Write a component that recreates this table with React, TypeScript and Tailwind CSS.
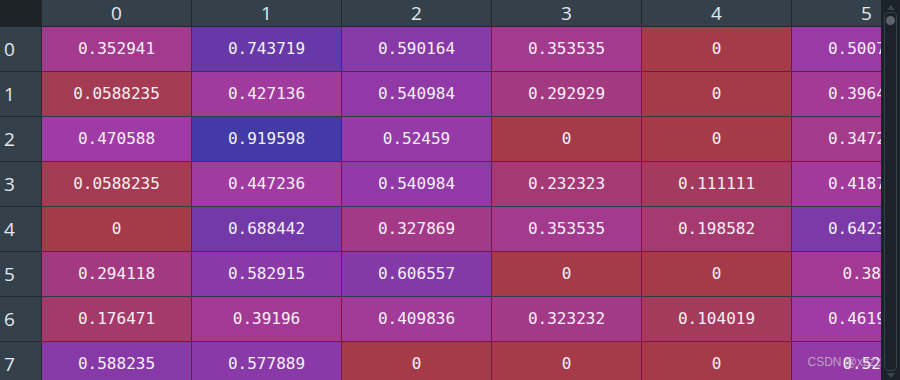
import React from "react";

const data: number[][] = [
  [0.352941, 0.743719, 0.590164, 0.353535, 0, 0.500705],
  [0.0588235, 0.427136, 0.540984, 0.292929, 0, 0.396402],
  [0.470588, 0.919598, 0.52459, 0, 0, 0.347281],
  [0.0588235, 0.447236, 0.540984, 0.232323, 0.111111, 0.418778],
  [0, 0.688442, 0.327869, 0.353535, 0.198582, 0.642324],
  [0.294118, 0.582915, 0.606557, 0, 0, 0.381],
  [0.176471, 0.39196, 0.409836, 0.323232, 0.104019, 0.461997],
  [0.588235, 0.577889, 0, 0, 0, 0.526],
];

// value -> background, red through magenta to blue
const stops: [number, number[]][] = [
  [0, [165, 59, 72]],
  [0.35, [163, 58, 140]],
  [0.47, [160, 58, 166]],
  [0.6, [133, 57, 168]],
  [0.92, [67, 58, 168]],
];

function cellColor(v: number) {
  for (let i = 1; i < stops.length; i++) {
    const [v1, c1] = stops[i];
    const [v0, c0] = stops[i - 1];
    if (v <= v1 || i === stops.length - 1) {
      const t = Math.min(1, Math.max(0, (v - v0) / (v1 - v0)));
      const c = c0.map((x, k) => Math.round(x + (c1[k] - x) * t));
      return `rgb(${c[0]},${c[1]},${c[2]})`;
    }
  }
  return "rgb(165,59,72)";
}

const fmt = (v: number) => (v === 0 ? "0" : String(v));

export default function App() {
  return (
    <div className="w-[900px] h-[380px] flex bg-[#1b2229] overflow-hidden">
      <div className="flex-1 overflow-hidden relative">
        <div className="grid grid-cols-[42px_repeat(6,150px)] w-max">
          {/* header */}
          <div className="h-[27px] bg-[#1b2228] border-r border-b border-[#1f282e]" />
          {[0, 1, 2, 3, 4, 5].map((c) => (
            <div
              key={c}
              className="h-[27px] bg-[#34414b] border-r border-b border-[#1f282e] flex items-center justify-center text-[19px] text-[#e3e8ec] font-['Open_Sans',sans-serif]"
            >
              {c}
            </div>
          ))}

          {data.map((row, r) => (
            <React.Fragment key={r}>
              <div className="h-[45px] bg-[#34414b] border-r border-b border-[#232c33] flex items-center pl-[4px] text-[19px] text-[#e3e8ec] font-['Open_Sans',sans-serif]">
                {r}
              </div>
              {row.map((v, c) => (
                <div
                  key={c}
                  className="h-[45px] border-r border-b border-[#2e3a46] flex items-center justify-center text-[16px] text-[#f4f0f4] font-['DejaVu_Sans_Mono',monospace]"
                  style={{ backgroundColor: cellColor(v) }}
                >
                  {fmt(v)}
                </div>
              ))}
            </React.Fragment>
          ))}
        </div>
        <div className="absolute right-[0px] bottom-[9px] text-[12px] text-[#c8c8c8]/75 font-['Liberation_Sans',sans-serif]">
          CSDN @xzzz
        </div>
      </div>

      {/* scrollbar */}
      <div className="w-[19px] h-full flex flex-col items-center bg-[#1b2229]">
        <svg width="10" height="8" viewBox="0 0 10 8" className="mt-[3px]">
          <path d="M1 7 L5 2 L9 7 Z" fill="#3b454e" />
        </svg>
        <div className="flex-1 w-[13px] mt-[1px] mb-[1px] rounded-[4px] border border-[#34404a] flex flex-col items-center pt-[3px]">
          <div className="w-[9px] h-[9px] rounded-full bg-[#5d6368]" />
        </div>
        <svg width="10" height="8" viewBox="0 0 10 8">
          <path d="M1 1 L5 6 L9 1 Z" fill="#3b454e" />
        </svg>
      </div>
    </div>
  );
}
